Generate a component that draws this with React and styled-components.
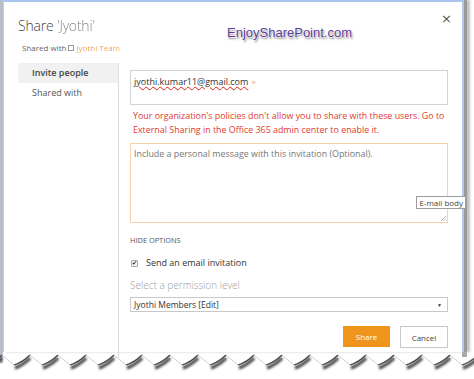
import React from 'react'
import styled, { createGlobalStyle } from 'styled-components'

const GlobalStyle = createGlobalStyle`
  *, *::before, *::after {
    box-sizing: border-box;
  }
  body {
    margin: 0;
    background: #ffffff;
    font-family: "Open Sans", "Noto Sans", sans-serif;
  }
`

const Page = styled.div`
  width: 474px;
  height: 379px;
  overflow: hidden;
  background: #ffffff;
`

const Frame = styled.div`
  position: relative;
  width: 464px;
  height: 352px;
  border-top: 2px solid #a9c5ee;
  border-left: 3px solid #b9bdc8;
  border-right: 2px solid #b3c9ea;
  box-shadow: 1px 0 0 #c9ccd2 inset, 3px 0 0 #9a9a9a, 6px 0 2px #c4c4c4;
  background: #ffffff;
`

const Header = styled.div`
  display: flex;
  justify-content: space-between;
  align-items: flex-start;
  padding: 12px 10px 0 15px;
`

const Title = styled.div`
  font-size: 14px;
  font-weight: 300;
  letter-spacing: -0.2px;
  color: #444444;
  line-height: 20px;
  margin-top: 2px;
`

const Blurred = styled.span`
  color: ${p => p.$color || '#777777'};
  filter: blur(0.5px);
`

const Close = styled.div`
  font-size: 13px;
  line-height: 9px;
  color: #555555;
  font-family: "DejaVu Sans", sans-serif;
`

const Watermark = styled.div`
  position: absolute;
  left: 224px;
  top: 23px;
  font-family: "Liberation Sans", Arial, sans-serif;
  font-size: 13px;
  color: #5a3d98;
  text-shadow: 0 0 1px #fff, 0 0 2px #fff, 1px 2px 2px rgba(0, 0, 0, 0.5);
`

const SharedWith = styled.div`
  display: flex;
  align-items: center;
  gap: 2px;
  padding: 6px 0 0 19px;
  font-size: 8px;
  color: #666666;
`

const Box = styled.span`
  display: inline-block;
  width: 6px;
  height: 6px;
  border: 1px solid #9a9a9a;
`

const Body = styled.div`
  display: flex;
  margin-top: 10px;
  padding-left: 15px;
`

const Sidebar = styled.div`
  width: 101px;
  height: 296px;
  border-right: 1px solid #dddddd;
`

const NavItem = styled.div`
  height: 20px;
  line-height: 20px;
  padding-left: 14px;
  font-size: 9px;
  font-weight: ${p => (p.$active ? 600 : 400)};
  color: ${p => (p.$active ? '#444444' : '#555555')};
  background: ${p => (p.$active ? '#f1f1f1' : 'transparent')};
`

const Main = styled.div`
  width: 329px;
  padding-left: 11px;
  padding-top: 7px;
  display: flex;
  flex-direction: column;
`

const EmailBox = styled.div`
  height: 35px;
  border: 1px solid #d2d2d2;
  padding: 4px 3px 0;
  font-size: 9px;
  color: #333333;
`

const Email = styled.span`
  text-decoration: underline wavy #e0201a;
  text-decoration-thickness: 1px;
  text-underline-offset: 1px;
`

const Remove = styled.span`
  margin-left: 3px;
  color: #e8a070;
  font-size: 8px;
`

const Error = styled.div`
  margin-top: 4px;
  padding-left: 3px;
  font-size: 8.9px;
  line-height: 14px;
  color: #e23a2f;
`

const Message = styled.div`
  position: relative;
  margin-top: 6px;
  height: 80px;
  border: 1px solid #f6d2aa;
  padding: 3px 3px 0;
  font-size: 8.9px;
  color: #777777;
`

const Tooltip = styled.div`
  position: absolute;
  right: -19px;
  top: 52px;
  padding: 0 2px;
  background: #ffffff;
  border: 1px solid #9d9d9d;
  font-size: 8px;
  line-height: 11px;
  color: #444444;
`

const Grip = styled.svg`
  position: absolute;
  right: 1px;
  bottom: 1px;
`

const Options = styled.div`
  margin-top: 11px;
  font-size: 7.4px;
  line-height: 12px;
  color: #555555;
`

const CheckRow = styled.div`
  display: flex;
  align-items: center;
  gap: 8px;
  margin-top: 11px;
  padding-left: 1px;
  font-size: 9px;
  line-height: 12px;
  color: #333333;
`

const Check = styled.span`
  display: inline-flex;
  align-items: center;
  justify-content: center;
  width: 7px;
  height: 7px;
  border: 1px solid #aaaaaa;
  border-radius: 1px;
  background: #f4f4f4;
  font-size: 6px;
  line-height: 6px;
  color: #222222;
`

const Label = styled.div`
  margin-top: 9px;
  font-size: 10px;
  font-weight: 300;
  line-height: 14px;
  color: #9d9d9d;
`

const Select = styled.div`
  display: flex;
  justify-content: space-between;
  align-items: center;
  margin-top: 5px;
  height: 15px;
  border: 1px solid #c8c8c8;
  padding: 0 5px 0 3px;
  font-size: 8.5px;
  color: #333333;
`

const Caret = styled.span`
  font-size: 5px;
  color: #333333;
`

const Buttons = styled.div`
  display: flex;
  justify-content: flex-end;
  align-items: flex-start;
  gap: 10px;
  margin-top: 14px;
`

const Button = styled.div`
  width: ${p => (p.$primary ? '47px' : '48px')};
  height: ${p => (p.$primary ? '21px' : '22px')};
  display: flex;
  align-items: center;
  justify-content: center;
  font-size: 8px;
  color: ${p => (p.$primary ? '#ffffff' : '#444444')};
  background: ${p => (p.$primary ? '#f0951c' : '#ffffff')};
  border: ${p => (p.$primary ? 'none' : '1px solid #c8c8c8')};
`

const TornEdge = () => {
  const teeth = Array.from({ length: 18 }, (_, i) => i * 28 - 14)
  return (
    <svg width="474" height="27" style={{ display: 'block' }}>
      <defs>
        <filter id="soft" x="-20%" y="-50%" width="140%" height="200%">
          <feGaussianBlur stdDeviation="1.3" />
        </filter>
      </defs>
      <rect x="0" y="0" width="3" height="11" fill="#b9bdc8" />
      <rect x="462" y="0" width="5" height="5" fill="#a9a9a9" />
      {teeth.map(x => (
        <g key={x}>
          <path
            d={`M ${x + 1} 14 Q ${x + 9} 11 ${x + 16} 4`}
            stroke="#333"
            strokeWidth="3.5"
            fill="none"
            filter="url(#soft)"
            opacity="0.85"
            transform="translate(0 2)"
          />
          <path d={`M ${x} 13 Q ${x + 9} 10 ${x + 16} 3`} stroke="#4a4a4a" strokeWidth="1.3" fill="none" />
          <path d={`M ${x + 16} 3 L ${x + 28} 13`} stroke="#c4c4c4" strokeWidth="0.8" fill="none" />
        </g>
      ))}
    </svg>
  )
}

export default function App() {
  return (
    <Page>
      <GlobalStyle />
      <Frame>
        <Header>
          <Title>
            Share <Blurred $color="#888888">'Jyothi'</Blurred>
          </Title>
          <Close>×</Close>
        </Header>
        <Watermark>EnjoySharePoint.com</Watermark>
        <SharedWith>
          Shared with <Box /> <Blurred $color="#f2a65a">Jyothi Team</Blurred>
        </SharedWith>
        <Body>
          <Sidebar>
            <NavItem $active>Invite people</NavItem>
            <NavItem>Shared with</NavItem>
          </Sidebar>
          <Main>
            <EmailBox>
              <Email>jyothi.kumar11@gmail.com</Email>
              <Remove>×</Remove>
            </EmailBox>
            <Error>
              Your organization's policies don't allow you to share with these users. Go to
              External Sharing in the Office 365 admin center to enable it.
            </Error>
            <Message>
              Include a personal message with this invitation (Optional).
              <Tooltip>E-mail body</Tooltip>
              <Grip width="5" height="5" viewBox="0 0 5 5">
                <path d="M5 0 L0 5 M5 2.5 L2.5 5" stroke="#999" strokeWidth="0.7" />
              </Grip>
            </Message>
            <Options>HIDE OPTIONS</Options>
            <CheckRow>
              <Check>✔</Check>
              Send an email invitation
            </CheckRow>
            <Label>Select a permission level</Label>
            <Select>
              Jyothi Members [Edit]
              <Caret>▼</Caret>
            </Select>
            <Buttons>
              <Button $primary>Share</Button>
              <Button>Cancel</Button>
            </Buttons>
          </Main>
        </Body>
      </Frame>
      <TornEdge />
    </Page>
  )
}
